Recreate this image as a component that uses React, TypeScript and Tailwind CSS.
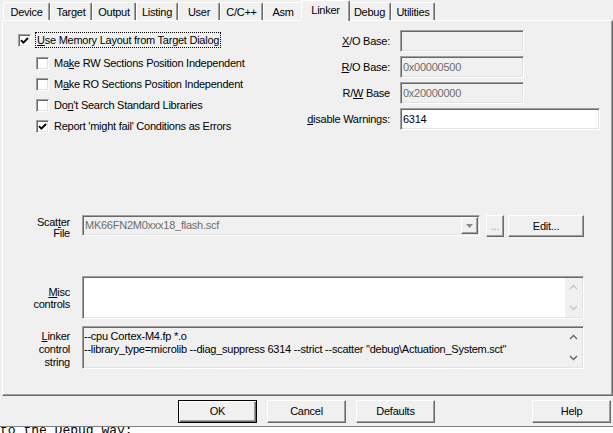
import React from "react";

const sunken =
  "border border-t-[#a0a0a0] border-l-[#a0a0a0] border-r-white border-b-white shadow-[inset_1px_1px_0_#696969,inset_-1px_-1px_0_#e3e3e3]";
const raised =
  "border border-t-white border-l-white border-r-[#696969] border-b-[#696969] shadow-[inset_-1px_-1px_0_#a0a0a0]";

function Box({ checked }: { checked?: boolean }) {
  return (
    <span className={`w-[13px] h-[13px] shrink-0 bg-white flex items-center justify-center ${sunken}`}>
      {checked && (
        <svg width="9" height="9" viewBox="0 0 9 9">
          <path d="M1 4.2 L3.4 6.6 L8 2" stroke="#000" strokeWidth="1.9" fill="none" />
        </svg>
      )}
    </span>
  );
}

function Chevron({ up, color }: { up?: boolean; color: string }) {
  return (
    <svg width="9" height="6" viewBox="0 0 9 6">
      <path
        d={up ? "M1 5 L4.5 1.5 L8 5" : "M1 1 L4.5 4.5 L8 1"}
        stroke={color}
        strokeWidth="1.3"
        fill="none"
      />
    </svg>
  );
}

const tabs: { name: string; w: string; active?: boolean }[] = [
  { name: "Device", w: "w-[47px]" },
  { name: "Target", w: "w-[42px]" },
  { name: "Output", w: "w-[44px]" },
  { name: "Listing", w: "w-[42px]" },
  { name: "User", w: "w-[42px]" },
  { name: "C/C++", w: "w-[43px]" },
  { name: "Asm", w: "w-[40px]" },
  { name: "Linker", w: "w-[49px]", active: true },
  { name: "Debug", w: "w-[43px]" },
  { name: "Utilities", w: "w-[44px]" },
];

export default function App() {
  return (
    <div className="w-[613px] h-[433px] bg-[#f0f0f0] overflow-hidden text-[11px] tracking-[-0.25px] text-black font-['Liberation_Sans',Arial,sans-serif] leading-[13px]">
      {/* tabs */}
      <div className="flex items-end h-[20px] pl-[3px]">
        {tabs.map((t) =>
          t.active ? (
            <div
              key={t.name}
              className={`${t.w} h-[21px] -mb-[1px] -mx-[2px] relative z-10 bg-[#f0f0f0] border-t border-l border-r border-t-white border-l-white border-r-[#696969] shadow-[inset_-1px_0_0_#a0a0a0] rounded-t-[2px] flex justify-center pt-[3px]`}
            >
              {t.name}
            </div>
          ) : (
            <div
              key={t.name}
              className={`${t.w} h-[18px] border-t border-l border-r border-t-white border-l-white border-r-[#696969] shadow-[inset_-1px_0_0_#a0a0a0] rounded-t-[2px] flex justify-center pt-[3px]`}
            >
              {t.name}
            </div>
          )
        )}
      </div>

      {/* panel */}
      <div className="ml-[2px] w-[611px] h-[376px] border border-t-white border-l-white border-r-[#696969] border-b-[#696969] shadow-[inset_-1px_-1px_0_#a0a0a0] flex flex-col">
        {/* top section */}
        <div className="flex h-[116px]">
          <div className="w-[297px] flex flex-col pl-[15px]">
            <div className="mt-[11px] h-[16px] flex items-center">
              <Box checked />
              <span className="ml-[4px] h-[16px] px-[1px] border border-dotted border-black flex items-center">
                <span className="underline underline-offset-[1px]">U</span>se Memory Layout from Target Dialog
              </span>
            </div>
            <div className="mt-[5px] pl-[18px] flex flex-col">
              <div className="h-[21px] flex items-center gap-[5px]">
                <Box />
                <span>
                  Ma<span className="underline underline-offset-[1px]">k</span>e RW Sections Position Independent
                </span>
              </div>
              <div className="h-[21px] flex items-center gap-[5px]">
                <Box />
                <span>
                  M<span className="underline underline-offset-[1px]">a</span>ke RO Sections Position Independent
                </span>
              </div>
              <div className="h-[21px] flex items-center gap-[5px]">
                <Box />
                <span>
                  Do<span className="underline underline-offset-[1px]">n</span>'t Search Standard Libraries
                </span>
              </div>
              <div className="h-[21px] flex items-center gap-[5px]">
                <Box checked />
                <span>
                  Report 'mi<span className="underline underline-offset-[1px]">g</span>ht fail' Conditions as Errors
                </span>
              </div>
            </div>
          </div>
          <div className="mt-[9px] grid grid-cols-[90px_auto] gap-x-[10px] gap-y-[4px] content-start">
            <div className="h-[22px] flex items-center justify-end">
              <span className="underline underline-offset-[1px]">X</span>/O Base:
            </div>
            <div className={`w-[124px] h-[22px] bg-[#f0f0f0] ${sunken}`} />
            <div className="h-[22px] flex items-center justify-end">
              <span className="underline underline-offset-[1px]">R</span>/O Base:
            </div>
            <div className={`w-[124px] h-[22px] bg-[#f0f0f0] text-[#6d6d6d] pl-[2px] flex items-center ${sunken}`}>
              0x00000500
            </div>
            <div className="h-[22px] flex items-center justify-end">
              R/<span className="underline underline-offset-[1px]">W</span>&nbsp;Base
            </div>
            <div className={`w-[124px] h-[22px] bg-[#f0f0f0] text-[#6d6d6d] pl-[2px] flex items-center ${sunken}`}>
              0x20000000
            </div>
            <div className="h-[22px] flex items-center justify-end whitespace-nowrap">
              <span className="underline underline-offset-[1px]">d</span>isable Warnings:
            </div>
            <div className={`w-[200px] h-[22px] bg-white pl-[2px] flex items-center ${sunken}`}>6314</div>
          </div>
        </div>

        {/* scatter row */}
        <div className="mt-[78px] flex items-start">
          <div className="w-[67px] mt-[2px] text-right leading-[11px]">
            Scat<span className="underline underline-offset-[1px]">t</span>er
            <br />
            File
          </div>
          <div className={`ml-[12px] w-[398px] h-[21px] bg-[#f0f0f0] flex items-center ${sunken}`}>
            <span className="pl-[2px] flex-1 text-[#6d6d6d]">MK66FN2M0xxx18_flash.scf</span>
            <div className={`w-[17px] h-[17px] mr-[1px] flex items-center justify-center ${raised}`}>
              <svg width="7" height="4" viewBox="0 0 7 4">
                <path d="M0 0 L7 0 L3.5 4 Z" fill="#8a8a8a" />
              </svg>
            </div>
          </div>
          <div className={`ml-[6px] w-[18px] h-[22px] flex items-center justify-center text-[#a0a0a0] ${raised}`}>
            ...
          </div>
          <div className={`ml-[4px] w-[76px] h-[22px] flex items-center justify-center ${raised}`}>Edit...</div>
        </div>

        {/* misc row */}
        <div className="mt-[37px] flex items-center">
          <div className="w-[67px] text-right leading-[12px]">
            <span className="underline underline-offset-[1px]">M</span>isc
            <br />
            controls
          </div>
          <div className={`ml-[12px] w-[502px] h-[43px] bg-white flex ${sunken}`}>
            <div className="flex-1" />
            <div className="w-[17px] mr-[1px] my-[1px] bg-[#f0f0f0] flex flex-col justify-between items-center py-[6px]">
              <Chevron up color="#c4c4c4" />
              <Chevron color="#c4c4c4" />
            </div>
          </div>
        </div>

        {/* linker row */}
        <div className="mt-[7px] flex items-start">
          <div className="w-[67px] mt-[4px] text-right leading-[13px]">
            <span className="underline underline-offset-[1px]">L</span>inker
            <br />
            control
            <br />
            string
          </div>
          <div className={`ml-[12px] w-[502px] h-[43px] bg-[#f0f0f0] flex ${sunken}`}>
            <div className="flex-1 pl-[1px] pt-[3px] leading-[13px] whitespace-nowrap overflow-hidden">
              --cpu Cortex-M4.fp *.o
              <br />
              --library_type=microlib --diag_suppress 6314 --strict --scatter "debug\Actuation_System.sct"
            </div>
            <div className="w-[17px] mr-[1px] my-[1px] bg-[#f0f0f0] flex flex-col justify-between items-center py-[6px]">
              <Chevron up color="#606060" />
              <Chevron color="#606060" />
            </div>
          </div>
        </div>
      </div>

      {/* buttons */}
      <div className="mt-[4px] flex h-[23px]">
        <div className="ml-[178px] w-[79px] h-[23px] border border-black shadow-[inset_1px_1px_0_#fff,inset_-1px_-1px_0_#696969,inset_-2px_-2px_0_#a0a0a0] flex items-center justify-center">
          OK
        </div>
        <div className={`ml-[10px] w-[79px] h-[23px] flex items-center justify-center ${raised}`}>Cancel</div>
        <div className={`ml-[10px] w-[79px] h-[23px] flex items-center justify-center ${raised}`}>Defaults</div>
        <div className={`ml-auto mr-[2px] w-[79px] h-[23px] flex items-center justify-center ${raised}`}>Help</div>
      </div>

      {/* background window strip */}
      <div className="mt-[3px] h-[7px] border-t border-t-[#808080] bg-white overflow-hidden">
        <div className="-mt-[3px] font-['Liberation_Mono',monospace] text-[13px] leading-[13px] tracking-normal whitespace-nowrap">
          to the Debug way:
        </div>
      </div>
    </div>
  );
}
